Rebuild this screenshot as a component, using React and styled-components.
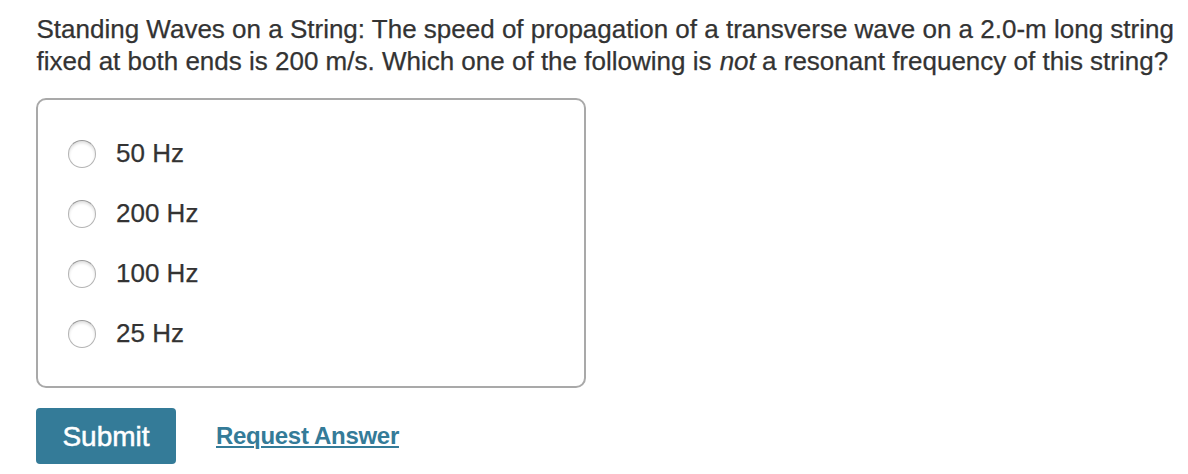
import styled, { createGlobalStyle } from "styled-components"

const Colors = {
    text: "#333333",
    border: "#a9a9a9",
    teal: "#347b98",
    white: "#ffffff",
}

const choices = ["50 Hz", "200 Hz", "100 Hz", "25 Hz"]

export default function App() {
    return (
        <Page>
            <GlobalStyle />
            <Question>
                <QuestionLine>
                    Standing Waves on a String: The speed of propagation of a transverse wave on a 2.0-m long string
                </QuestionLine>
                <QuestionLine>
                    fixed at both ends is 200 m/s. Which one of the following is <Emphasis>not</Emphasis> a resonant frequency of this string?
                </QuestionLine>
            </Question>

            <ChoicesWrapper>
                {choices.map((choice) => (
                    <Choice key={choice}>
                        <Radio type="radio" name="frequency" value={choice} />
                        <ChoiceText>{choice}</ChoiceText>
                    </Choice>
                ))}
            </ChoicesWrapper>

            <Actions>
                <SubmitButton>Submit</SubmitButton>
                <RequestLink href="#">Request Answer</RequestLink>
            </Actions>
        </Page>
    )
}

const GlobalStyle = createGlobalStyle`
    * {
        box-sizing: border-box;
    }

    body {
        margin: 0;
        background-color: ${Colors.white};
        overflow: hidden;
    }
`

const Page = styled.div`
    width: 1188px;
    height: 474px;
    padding: 13px 0 0 36px;
    color: ${Colors.text};
    font-family: "Liberation Sans", Arial, sans-serif;
    font-size: 26px;
    -webkit-text-stroke: 0.25px currentColor;
`

const Question = styled.div`
    padding-left: 0.5px;
`

const QuestionLine = styled.div`
    line-height: 32px;
    white-space: nowrap;
`

const Emphasis = styled.em`
    margin-left: 1px;
    margin-right: -1px;
`

const ChoicesWrapper = styled.div`
    width: 550px;
    height: 290px;
    margin-top: 21px;
    padding: 24px 30px;
    border: 2px solid ${Colors.border};
    border-radius: 10px;
`

const Choice = styled.label`
    height: 60px;
    display: flex;
    align-items: center;
    gap: 20px;
`

const Radio = styled.input`
    appearance: none;
    width: 28px;
    height: 28px;
    margin: 0;
    border: 1px solid #b4b4b4;
    border-top-color: #989898;
    border-radius: 50%;
    background-color: ${Colors.white};
    box-shadow: inset 0 2px 3px rgba(0, 0, 0, 0.13);
`

const ChoiceText = styled.span`
    line-height: 32px;
    padding-bottom: 2px;
`

const Actions = styled.div`
    display: flex;
    align-items: center;
    gap: 40px;
    margin-top: 20px;
`

const SubmitButton = styled.button`
    width: 140px;
    height: 56px;
    padding: 2px 0 0;
    border: none;
    border-radius: 4px;
    background-color: ${Colors.teal};
    color: ${Colors.white};
    font-family: inherit;
    font-size: 28px;
    -webkit-text-stroke: 0.5px currentColor;
`

const RequestLink = styled.a`
    color: ${Colors.teal};
    font-size: 24px;
    font-weight: bold;
    letter-spacing: -0.3px;
    text-decoration-thickness: 2px;
    text-underline-offset: 2px;
    -webkit-text-stroke: 0;
`
